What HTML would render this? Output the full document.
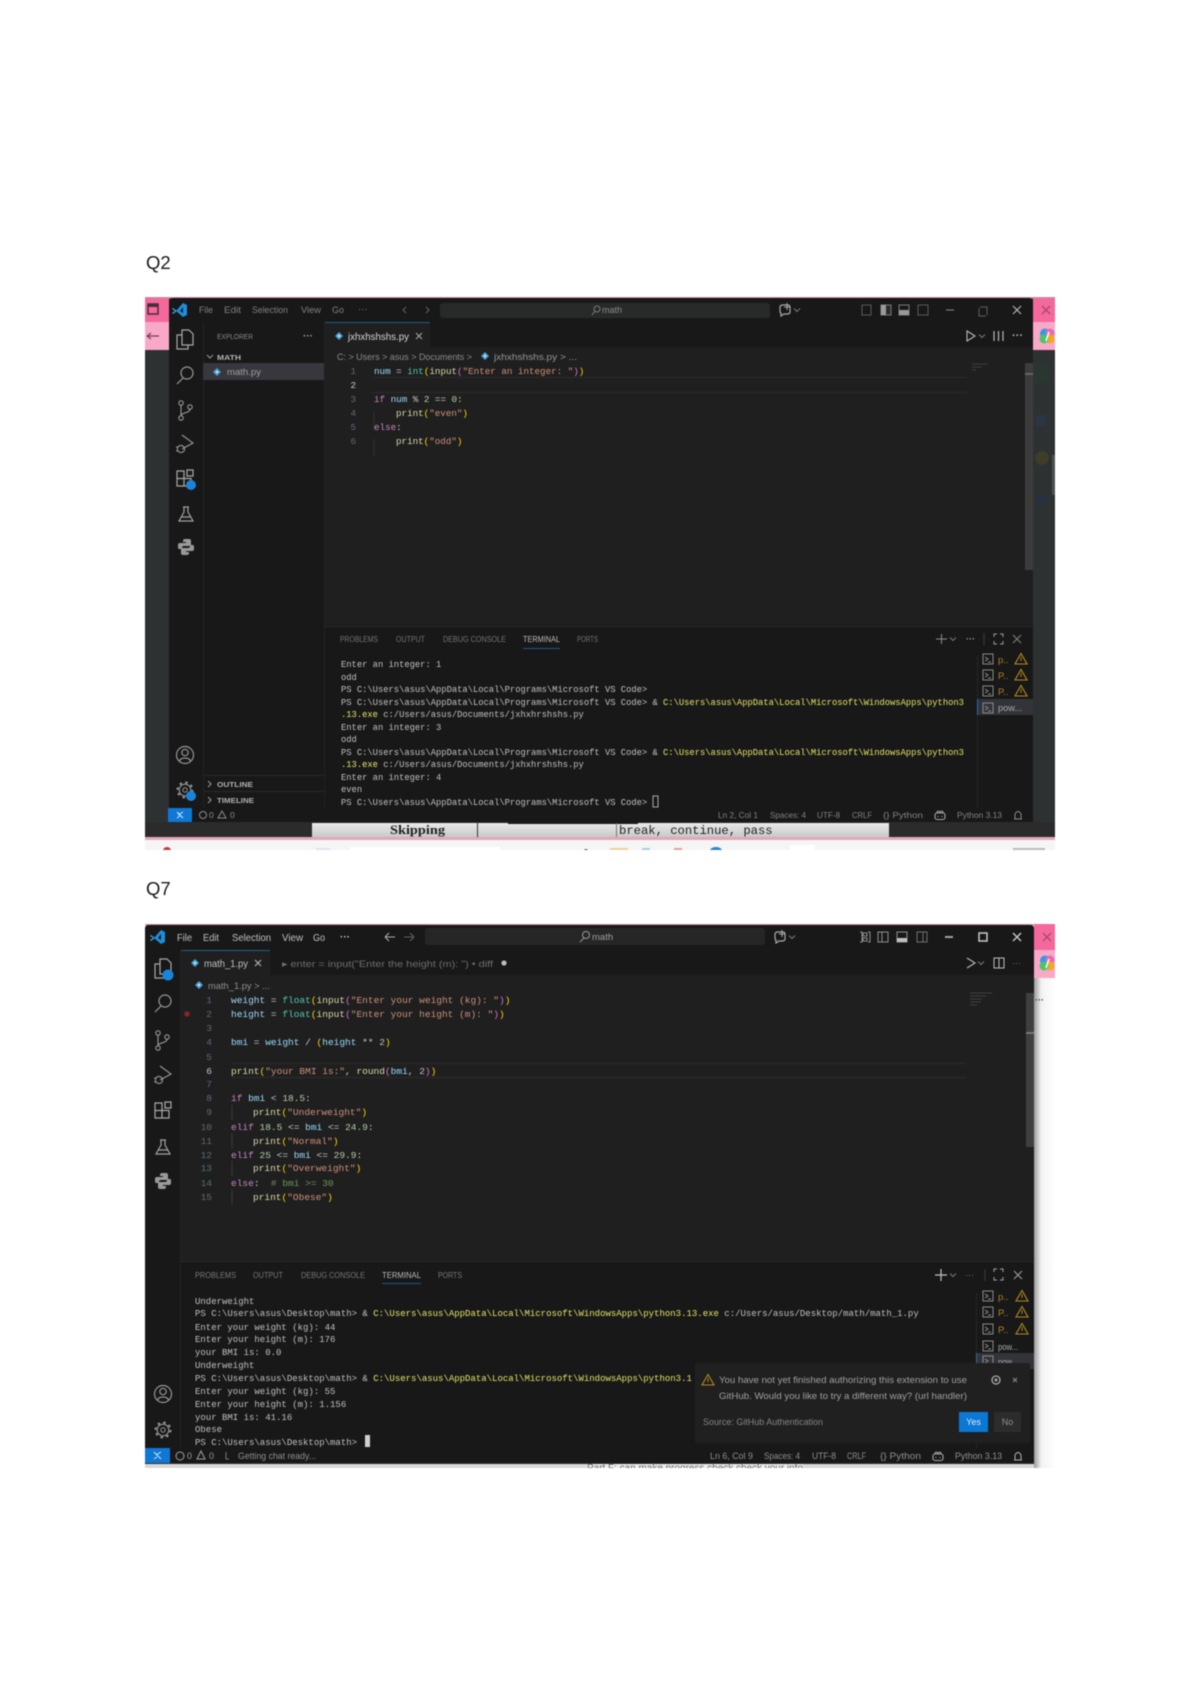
<!DOCTYPE html>
<html><head><meta charset="utf-8"><title>Q2 Q7</title>
<style>
html,body{margin:0;padding:0;background:#fff;width:1200px;height:1696px;overflow:hidden}
svg{display:block;position:absolute;left:0;top:0;filter:blur(.6px)}
text{white-space:pre}
.m{font-family:"Liberation Mono",monospace}
.s{font-family:"Liberation Sans",sans-serif}
.v{fill:#9cdcfe}.f{fill:#dcdcaa}.t{fill:#ce9178}.k{fill:#c586c0}.n{fill:#b5cea8}.b{fill:#ffd700}.c{fill:#4ec9b0}.w{fill:#cccccc}.y{fill:#e3e36a}.g{fill:#6a9955}.p{fill:#da70d6}
</style></head><body>
<svg width="1200" height="1696" viewBox="0 0 1200 1696" xmlns="http://www.w3.org/2000/svg">
<defs>
<g id="logo"><path d="M-7 -2 L-3 1 L-7 4 L-8 3 L-5 1 L-8 -1Z" fill="#3aa5e8"/><path d="M3 -7 L7 -5 V5 L3 7 L-4 1Z M3 -3 L0 1 L3 3Z" fill="#1c8fdc"/></g>
<g id="py"><path d="M0 -4 L4 0 L0 4 L-4 0Z" fill="#4a9fd0"/><circle r="1.2" fill="#d6e8f0"/></g>
<g id="files" fill="none" stroke="#a8a8a8" stroke-width="1.2"><path d="M-3 -9H4L8 -5V6H-3Z"/><path d="M-3 -4H-8V10H3V6"/></g>
<g id="search" fill="none" stroke="#989898" stroke-width="1.2"><circle cx="2" cy="-2" r="6"/><path d="M-2 3L-8 9"/></g>
<g id="git" fill="none" stroke="#989898" stroke-width="1.1"><circle cx="-4" cy="-7" r="2.2"/><circle cx="-4" cy="8" r="2.2"/><circle cx="5" cy="-3" r="2.2"/><path d="M-4 -5V6M5 -1C5 3 -1 2 -4 5"/></g>
<g id="debug" fill="none" stroke="#989898" stroke-width="1.1"><path d="M-3 -9L8 -1L-3 5"/><circle cx="-4" cy="5" r="3.6"/><path d="M-9 3H-7M-9 7H-7"/></g>
<g id="ext" fill="none" stroke="#a8a8a8" stroke-width="1.2"><path d="M-8 -7H-1V8H-8ZM-8 0.500H6V8H-8ZM2 -8H8V-2H2Z"/></g>
<g id="flask" fill="none" stroke="#a0a0a0" stroke-width="1.2"><path d="M-3 -7H3M-2 -7V-2L-7 7H7L2 -2V-7M-5 3H5"/></g>
<g id="pyfull"><path d="M-1 -8H3Q5 -8 5 -6V-1H-2Q-4 -1 -4 1V2H-7Q-8 2 -8 0V-2Q-8 -4 -6 -4H0V-5H-3V-6Q-3 -8 -1 -8Z" fill="#9a9a9a"/><path d="M1 8H-3Q-5 8 -5 6V1H2Q4 1 4 -1V-2H7Q8 -2 8 0V2Q8 4 6 4H0V5H3V6Q3 8 1 8Z" fill="#9a9a9a"/></g>
<g id="acct" fill="none" stroke="#969696" stroke-width="1.2"><circle r="8.500"/><circle cy="-2.500" r="3.200"/><path d="M-5.500 6C-4 2 4 2 5.500 6"/></g>
<g id="gear" fill="none" stroke="#969696"><circle r="5.800" stroke-width="1.1"/><circle r="7.500" stroke-width="2" stroke-dasharray="2.400 3.500"/><circle r="2.200" stroke-width="1"/></g>
<g id="warn"><path d="M0 -5.500L6 5H-6Z" fill="none" stroke="#b08a20" stroke-width="1.100"/><path d="M0 -2V2" stroke="#b08a20"/></g>
<g id="term" fill="none" stroke="#8a8a8a" stroke-width="1"><rect x="-5" y="-5" width="10" height="10"/><path d="M-3 -2L0 0L-3 2M0 3H3"/></g>
<g id="copilot" fill="none" stroke="#aaaaaa" stroke-width="1.200"><path d="M-5 -3Q-5 -5 -2 -5H3Q5 -5 5 -3V2Q5 4 2 4H-1L-4 6V3Q-5 3 -5 1Z"/><path d="M2 -7V0M-1 -3H5" stroke-width="1"/></g>
<g id="chev" fill="none" stroke="#7a7a7a"><path d="M-3 -1.500L0 1.500L3 -1.500"/></g>
<g id="bot" fill="none" stroke="#a5a5a5" stroke-width="1.100"><rect x="-5" y="-2" width="10" height="6.500" rx="2"/><path d="M-3 -2Q-3 -5 0 -3Q3 -5 3 -2M-2 1V2M2 1V2"/></g>
<g id="cop"><circle cx="-2" cy="-2.500" r="5" fill="#2f9be8"/><circle cx="3" cy="-3" r="4.500" fill="#e86ab0"/><circle cx="3" cy="3" r="4.500" fill="#f5a623"/><circle cx="-3" cy="3" r="4.500" fill="#4fc36a"/><path d="M-1 5L2 -4" stroke="#fff" stroke-width="1.500"/></g>
<linearGradient id="fade" x1="0" x2="1" y1="0" y2="0"><stop offset="0" stop-color="#9a9a9a"/><stop offset=".35" stop-color="#f2f2f2"/><stop offset="1" stop-color="#fff"/></linearGradient>
<linearGradient id="tb" x1="0" x2="0" y1="0" y2="1"><stop offset="0" stop-color="#e9e9e9"/><stop offset="1" stop-color="#c9c9c9"/></linearGradient>
</defs>

<text class="s" x="146" y="269" font-size="18.500" fill="#1a1a1a">Q2</text>
<text class="s" x="146" y="895" font-size="18.500" fill="#1a1a1a">Q7</text>

<!-- ============ SCREENSHOT 1 ============ -->
<rect x="145" y="297" width="910" height="553" fill="#2d3131"/>
<rect x="145" y="297" width="24" height="25" fill="#f4689c"/>
<rect x="145" y="322" width="24" height="28" fill="#f9a9c8"/>
<rect x="1033" y="297" width="22" height="25" fill="#f4689c"/>
<rect x="1033" y="322" width="22" height="28" fill="#f9a9c8"/>
<rect x="145" y="297" width="910" height="1.500" fill="#c98a9e"/>
<rect x="148" y="304" width="10" height="10" fill="none" stroke="#4a2a38" stroke-width="1.500"/><rect x="148" y="304" width="10" height="3" fill="#4a2a38"/>
<path d="M147 336H159M147 336L151 333M147 336L151 339" stroke="#7a3a55" stroke-width="1.200" fill="none"/>
<path d="M1042 306L1050 314M1050 306L1042 314" stroke="#a84a70" stroke-width="1.300"/>
<use href="#cop" x="1047" y="336"/>
<circle cx="1040" cy="373" r="11" fill="#2a3731"/>
<rect x="1036" y="415" width="10" height="11" fill="#2a3644"/>
<circle cx="1042" cy="458" r="7" fill="#3f3c28"/>
<rect x="1052" y="455" width="3" height="40" fill="#4c5050"/>
<rect x="1036" y="495" width="10" height="10" fill="#263240"/>

<!-- window -->
<rect x="169" y="298" width="864" height="524" rx="4" fill="#181818"/>
<rect x="324" y="347" width="709" height="278" fill="#1f1f1f"/>
<rect x="324" y="322" width="106" height="25" fill="#1f1f1f"/>
<rect x="324" y="322" width="106" height="1" fill="#1a5f8a"/>
<rect x="203" y="322" width="121" height="486" fill="#181818"/>
<rect x="203" y="322" width="1" height="486" fill="#222"/>
<rect x="324" y="322" width="1" height="486" fill="#222"/>
<rect x="324" y="626" width="709" height="1" fill="#2b2b2b"/>

<!-- titlebar -->
<use href="#logo" x="180" y="310"/>
<g class="s" font-size="9.500" fill="#808080">
<text x="199" y="313" textLength="14" lengthAdjust="spacingAndGlyphs">File</text>
<text x="224" y="313" textLength="17" lengthAdjust="spacingAndGlyphs">Edit</text>
<text x="252" y="313" textLength="36" lengthAdjust="spacingAndGlyphs">Selection</text>
<text x="301" y="313" textLength="20" lengthAdjust="spacingAndGlyphs">View</text>
<text x="332" y="313" textLength="12" lengthAdjust="spacingAndGlyphs">Go</text>
<text x="358" y="312">···</text>
</g>
<path d="M406 307L403 310L406 313M426 307L429 310L426 313" fill="none" stroke="#5e5e5e" stroke-width="1.100"/>
<rect x="440" y="303" width="330" height="15" rx="3" fill="#282a2a"/>
<circle cx="597" cy="309" r="3" fill="none" stroke="#7a7a7a"/><path d="M595 311L592 315" stroke="#7a7a7a"/>
<text class="s" x="602" y="313" font-size="9" fill="#8a8a8a">math</text>
<use href="#copilot" x="785" y="310"/>
<use href="#chev" x="797" y="310"/>
<g fill="none" stroke="#7a7a7a">
<rect x="862" y="305" width="9" height="10" stroke="#5a5a5a"/>
<rect x="881" y="305" width="10" height="10" fill="#2a2a2a"/><rect x="881" y="305" width="5" height="10" fill="#9a9a9a" stroke="none"/>
<rect x="899" y="305" width="10" height="10"/><rect x="899" y="310" width="10" height="5" fill="#9a9a9a" stroke="none"/>
<rect x="918" y="305" width="10" height="10" stroke="#5a5a5a"/>
<path d="M946 310H954" stroke="#8a8a8a"/>
<path d="M980 307H987V315M986 316H979V308" stroke="#5f5f5f"/>
<path d="M1013 306L1021 314M1021 306L1013 314" stroke="#b0b0b0" stroke-width="1.200"/>
</g>

<!-- tab row -->
<use href="#py" x="339" y="336"/>
<text class="s" x="348" y="340" font-size="10" fill="#d4d4d4" textLength="61" lengthAdjust="spacingAndGlyphs">jxhxhshshs.py</text>
<path d="M416 333L422 339M422 333L416 339" stroke="#a8a8a8" stroke-width="1"/>
<path d="M967 331L975 336L967 341Z" fill="none" stroke="#b8b8b8" stroke-width="1.100"/>
<use href="#chev" x="982" y="336"/>
<path d="M994 331V341M998.500 331V341M1003 331V341" stroke="#b8b8b8" stroke-width="1.200"/>
<text class="s" x="1012" y="339" font-size="11" fill="#b0b0b0" font-weight="bold">···</text>

<!-- sidebar -->
<text class="s" x="217" y="339" font-size="7.500" fill="#8a8a8a" textLength="36" lengthAdjust="spacingAndGlyphs">EXPLORER</text>
<text class="s" x="303" y="339" font-size="10" fill="#a0a0a0" font-weight="bold">···</text>
<path d="M207 355L210 358L213 355" fill="none" stroke="#999"/>
<text class="s" x="217" y="360" font-size="7.500" font-weight="bold" fill="#b4b4b4" textLength="24" lengthAdjust="spacingAndGlyphs">MATH</text>
<rect x="203" y="363" width="121" height="17" fill="#37373d"/>
<use href="#py" x="217" y="372"/>
<text class="s" x="227" y="375" font-size="9" fill="#a0a0a0" textLength="34" lengthAdjust="spacingAndGlyphs">math.py</text>
<rect x="204" y="775" width="120" height="1" fill="#2a2a2a"/><rect x="204" y="791" width="120" height="1" fill="#2a2a2a"/>
<path d="M208 781L211 784L208 787M208 797L211 800L208 803" fill="none" stroke="#999"/>
<g class="s" font-size="7.500" font-weight="bold" fill="#b0b0b0">
<text x="217" y="787" textLength="36" lengthAdjust="spacingAndGlyphs">OUTLINE</text>
<text x="217" y="803" textLength="37" lengthAdjust="spacingAndGlyphs">TIMELINE</text>
</g>

<!-- activity -->
<use href="#files" x="185" y="339"/>
<use href="#search" x="185" y="375"/>
<use href="#git" x="185" y="410"/>
<use href="#debug" x="185" y="444"/>
<use href="#ext" x="185" y="478"/>
<circle cx="191" cy="485" r="5" fill="#1a84d8"/>
<use href="#flask" x="186" y="514"/>
<use href="#pyfull" x="186" y="547"/>
<use href="#acct" x="185" y="755"/>
<use href="#gear" x="185" y="790"/>
<circle cx="191" cy="796" r="5" fill="#1a84d8"/>

<!-- breadcrumb -->
<text class="s" x="337" y="360" font-size="9.500" fill="#8a8a8a" textLength="135" lengthAdjust="spacingAndGlyphs">C: &gt; Users &gt; asus &gt; Documents &gt;</text>
<use href="#py" x="485" y="356"/>
<text class="s" x="494" y="360" font-size="9.500" fill="#969696" textLength="83" lengthAdjust="spacingAndGlyphs">jxhxhshshs.py &gt; ...</text>

<!-- code 1 -->
<rect x="372" y="377" width="595" height="1" fill="#2b2b2b"/><rect x="372" y="392" width="595" height="1" fill="#2b2b2b"/>
<path d="M374 412V430M374 439V456" stroke="#333" />
<g class="m" font-size="9.230" fill="#636a72" text-anchor="end">
<text x="356" y="374">1</text><text x="356" y="388" fill="#c8c8c8">2</text><text x="356" y="402">3</text><text x="356" y="416">4</text><text x="356" y="430">5</text><text x="356" y="444">6</text>
</g>
<g class="m" font-size="9.230">
<text x="374" y="374"><tspan class="v">num</tspan><tspan class="w"> = </tspan><tspan class="c">int</tspan><tspan class="b">(</tspan><tspan class="f">input</tspan><tspan class="p">(</tspan><tspan class="t">"Enter an integer: "</tspan><tspan class="p">)</tspan><tspan class="b">)</tspan></text>
<text x="374" y="402"><tspan class="k">if</tspan><tspan class="w"> </tspan><tspan class="v">num</tspan><tspan class="w"> % </tspan><tspan class="n">2</tspan><tspan class="w"> == </tspan><tspan class="n">0</tspan><tspan class="w">:</tspan></text>
<text x="396" y="416"><tspan class="f">print</tspan><tspan class="b">(</tspan><tspan class="t">"even"</tspan><tspan class="b">)</tspan></text>
<text x="374" y="430"><tspan class="k">else</tspan><tspan class="w">:</tspan></text>
<text x="396" y="444"><tspan class="f">print</tspan><tspan class="b">(</tspan><tspan class="t">"odd"</tspan><tspan class="b">)</tspan></text>
</g>
<path d="M972 364H988M972 367H982M972 370H976" stroke="#4a4a4a" stroke-width=".7"/>
<rect x="1025" y="363" width="8" height="207" fill="#3c3c3c"/><rect x="1025" y="373" width="8" height="2" fill="#666"/>

<!-- panel tabs -->
<g class="s" font-size="7.800" fill="#737373">
<text x="340" y="642" textLength="38" lengthAdjust="spacingAndGlyphs">PROBLEMS</text>
<text x="396" y="642" textLength="29" lengthAdjust="spacingAndGlyphs">OUTPUT</text>
<text x="443" y="642" textLength="63" lengthAdjust="spacingAndGlyphs">DEBUG CONSOLE</text>
<text x="523" y="642" textLength="37" lengthAdjust="spacingAndGlyphs" fill="#bcbcbc">TERMINAL</text>
<text x="577" y="642" textLength="21" lengthAdjust="spacingAndGlyphs">PORTS</text>
</g>
<rect x="523" y="648" width="37" height="1" fill="#1a5a88"/>
<path d="M936 639H947M941.500 634V644" stroke="#8f8f8f"/>
<use href="#chev" x="953" y="639"/>
<text class="s" x="966" y="642" font-size="9" fill="#999" font-weight="bold">···</text>
<path d="M984 633V645" stroke="#3a3a3a"/>
<path d="M994 637V634H997M1000 634H1003V637M1003 641V644H1000M997 644H994V641" fill="none" stroke="#9a9a9a"/>
<path d="M1013 635L1021 643M1021 635L1013 643" stroke="#808080"/>

<!-- terminal 1 -->
<g class="m" font-size="8.800" fill="#c0c0c0">
<text x="341" y="667">Enter an integer: 1</text>
<text x="341" y="680">odd</text>
<text x="341" y="692">PS C:\Users\asus\AppData\Local\Programs\Microsoft VS Code&gt;</text>
<text x="341" y="705">PS C:\Users\asus\AppData\Local\Programs\Microsoft VS Code&gt; &amp; <tspan class="y">C:\Users\asus\AppData\Local\Microsoft\WindowsApps\python3</tspan></text>
<text x="341" y="717"><tspan class="y">.13.exe</tspan> c:/Users/asus/Documents/jxhxhrshshs.py</text>
<text x="341" y="730">Enter an integer: 3</text>
<text x="341" y="742">odd</text>
<text x="341" y="755">PS C:\Users\asus\AppData\Local\Programs\Microsoft VS Code&gt; &amp; <tspan class="y">C:\Users\asus\AppData\Local\Microsoft\WindowsApps\python3</tspan></text>
<text x="341" y="767"><tspan class="y">.13.exe</tspan> c:/Users/asus/Documents/jxhxhrshshs.py</text>
<text x="341" y="780">Enter an integer: 4</text>
<text x="341" y="792">even</text>
<text x="341" y="805">PS C:\Users\asus\AppData\Local\Programs\Microsoft VS Code&gt;</text>
</g>
<rect x="653" y="796" width="5" height="11" fill="none" stroke="#a8a8a8"/>
<rect x="977" y="655" width="1" height="153" fill="#262626"/>
<rect x="977" y="699" width="56" height="16" fill="#33343a"/><rect x="977" y="699" width="1" height="16" fill="#1f6fa8"/>
<use href="#term" x="988" y="659"/><use href="#term" x="988" y="675"/><use href="#term" x="988" y="691"/><use href="#term" x="988" y="708"/>
<g class="s" font-size="9.500" fill="#a8852a">
<text x="998" y="663">p..</text><text x="998" y="679">P..</text><text x="998" y="695">P..</text>
<text x="998" y="711" fill="#a8a8a8" textLength="24" lengthAdjust="spacingAndGlyphs">pow...</text>
</g>
<use href="#warn" x="1021" y="659"/><use href="#warn" x="1021" y="675"/><use href="#warn" x="1021" y="691"/>

<!-- status 1 -->
<rect x="169" y="808" width="864" height="14" fill="#181818"/>
<rect x="168" y="808" width="24" height="14" rx="1" fill="#0f78d4"/>
<path d="M177 812L183 818M183 812L178 815M177 818L180 816" stroke="#cfe7fb" fill="none"/>
<circle cx="203" cy="815" r="3.500" fill="none" stroke="#8a8a8a"/>
<text class="s" x="209" y="818" font-size="8.500" fill="#8a8a8a">0</text>
<path d="M222 811L226 818H218Z" fill="none" stroke="#8a8a8a"/>
<text class="s" x="230" y="818" font-size="8.500" fill="#8a8a8a">0</text>
<g class="s" font-size="8.500" fill="#838383">
<text x="718" y="818" textLength="40" lengthAdjust="spacingAndGlyphs">Ln 2, Col 1</text>
<text x="770" y="818" textLength="36" lengthAdjust="spacingAndGlyphs">Spaces: 4</text>
<text x="817" y="818" textLength="23" lengthAdjust="spacingAndGlyphs">UTF-8</text>
<text x="852" y="818" textLength="20" lengthAdjust="spacingAndGlyphs">CRLF</text>
<text x="883" y="818" textLength="40" lengthAdjust="spacingAndGlyphs">{} Python</text>
<text x="957" y="818" textLength="45" lengthAdjust="spacingAndGlyphs">Python 3.13</text>
</g>
<use href="#bot" x="940" y="815"/>
<path d="M1014 819H1022M1015 819V814Q1018 809 1021 814V819" fill="none" stroke="#8a8a8a"/>

<!-- below window strip -->
<rect x="145" y="822" width="910" height="16" fill="#2b2b2b"/>
<rect x="312" y="823" width="577" height="14" fill="url(#tb)"/>
<rect x="508" y="822" width="130" height="2" fill="#1a1a1a"/>
<rect x="477" y="823" width="1" height="14" fill="#333"/>
<rect x="616" y="823" width="1" height="14" fill="#777"/>
<text x="390" y="834" font-family="'Liberation Serif',serif" font-weight="bold" font-size="13" fill="#222" textLength="55" lengthAdjust="spacingAndGlyphs">Skipping</text>
<text class="m" x="619" y="834" font-size="12.200" fill="#222">break, continue, pass</text>
<rect x="145" y="837" width="910" height="3" fill="#e6a5b8"/>
<rect x="145" y="840" width="910" height="10" fill="#f5f5f5"/>
<circle cx="167" cy="851" r="4" fill="#c23a3a"/>
<rect x="350" y="847" width="150" height="3" fill="#fff"/>
<rect x="316" y="848" width="14" height="2" fill="#dce6ee"/>
<circle cx="586" cy="851" r="2" fill="#555"/>
<rect x="610" y="848" width="18" height="2" fill="#ecd49a"/>
<rect x="642" y="848" width="8" height="2" fill="#a9cfdd"/>
<rect x="674" y="848" width="8" height="2" fill="#e0a0a0"/>
<ellipse cx="716" cy="851" rx="6" ry="4" fill="#2c82c9"/>
<rect x="790" y="845" width="25" height="5" fill="#fff"/>
<rect x="1013" y="848" width="32" height="2" fill="#bbb"/>
<rect x="140" y="850" width="920" height="10" fill="#fff"/>

<!-- ============ SCREENSHOT 2 ============ -->
<rect x="1034" y="924" width="21" height="544" fill="url(#fade)"/>
<rect x="145" y="1463" width="889" height="5" fill="#d8d8d8"/>
<rect x="145" y="924" width="910" height="1.200" fill="#c98a9e"/>
<rect x="1034" y="924" width="21" height="26" fill="#f4689c"/>
<rect x="1034" y="950" width="21" height="28" fill="#f9a9c8"/>
<path d="M1043 933L1051 941M1051 933L1043 941" stroke="#a84a70" stroke-width="1.300"/>
<use href="#cop" x="1047" y="963"/>
<text class="s" x="1035" y="1003" font-size="9" font-weight="bold" fill="#444">···</text>
<rect x="145" y="925" width="889" height="538" rx="3" fill="#181818"/>
<rect x="180" y="975" width="854" height="285" fill="#1f1f1f"/>
<rect x="180" y="950" width="90" height="25" fill="#1f1f1f"/>
<rect x="180" y="950" width="90" height="1" fill="#1a5f8a"/>
<rect x="180" y="950" width="1" height="498" fill="#222"/>
<rect x="180" y="1261" width="854" height="1" fill="#2b2b2b"/>

<!-- title -->
<use href="#logo" x="158" y="937"/>
<g class="s" font-size="10" fill="#c0c0c0">
<text x="177" y="941" textLength="15" lengthAdjust="spacingAndGlyphs">File</text>
<text x="203" y="941" textLength="16" lengthAdjust="spacingAndGlyphs">Edit</text>
<text x="232" y="941" textLength="39" lengthAdjust="spacingAndGlyphs">Selection</text>
<text x="282" y="941" textLength="21" lengthAdjust="spacingAndGlyphs">View</text>
<text x="313" y="941" textLength="12" lengthAdjust="spacingAndGlyphs">Go</text>
<text x="340" y="940" font-weight="bold">···</text>
</g>
<path d="M395 937H385M385 937L389 933M385 937L389 941" fill="none" stroke="#adadad" stroke-width="1.100"/>
<path d="M404 937H414M414 937L410 933M414 937L410 941" fill="none" stroke="#606060" stroke-width="1.100"/>
<rect x="425" y="928" width="340" height="17" rx="3" fill="#262626"/>
<circle cx="586" cy="935" r="3.500" fill="none" stroke="#999"/><path d="M584 938L580 942" stroke="#999"/>
<text class="s" x="592" y="940" font-size="9.500" fill="#a0a0a0">math</text>
<use href="#copilot" x="780" y="937"/>
<use href="#chev" x="792" y="937"/>
<g fill="none" stroke="#8f8f8f">
<path d="M860 932H862V942H860M868 932H870V942H868"/><rect x="863" y="933" width="4" height="3" /><rect x="863" y="938" width="4" height="3"/>
<rect x="878" y="932" width="10" height="10"/><path d="M882 932V942"/>
<rect x="897" y="932" width="10" height="10"/><rect x="897" y="938" width="10" height="4" fill="#bfbfbf" stroke="none"/>
<rect x="917" y="932" width="10" height="10" stroke="#707070"/><path d="M923 932V942" stroke="#707070"/>
<path d="M945 937H953" stroke="#a0a0a0" stroke-width="2"/>
<rect x="979" y="933" width="8" height="8" stroke="#c8c8c8" stroke-width="1.500"/>
<path d="M1013 933L1021 941M1021 933L1013 941" stroke="#d0d0d0" stroke-width="1.300"/>
</g>

<!-- tabs -->
<use href="#py" x="195" y="963"/>
<text class="s" x="204" y="967" font-size="10" fill="#c0c0c0" textLength="44" lengthAdjust="spacingAndGlyphs">math_1.py</text>
<path d="M255 960L261 966M261 960L255 966" stroke="#bcbcbc" stroke-width="1"/>
<text class="s" x="282" y="967" font-size="9.500" fill="#6e6e6e" textLength="211" lengthAdjust="spacingAndGlyphs">▸ enter = input("Enter the height (m): ") • diff</text>
<circle cx="504" cy="963" r="2.600" fill="#bcbcbc"/>
<path d="M967 958L975 963L967 968" fill="none" stroke="#bcbcbc" stroke-width="1.100"/>
<use href="#chev" x="981" y="963"/>
<rect x="994" y="958" width="10" height="10" fill="none" stroke="#bcbcbc"/><path d="M999 958V968" stroke="#bcbcbc"/>
<text class="s" x="1012" y="966" font-size="9" fill="#666">···</text>

<!-- activity -->
<use href="#files" x="163" y="968"/>
<circle cx="168" cy="975" r="5.500" fill="#1a84d8"/>
<use href="#search" x="163" y="1003"/>
<use href="#git" x="162" y="1040"/>
<use href="#debug" x="163" y="1075"/>
<use href="#ext" x="163" y="1110"/>
<use href="#flask" x="163" y="1147"/>
<use href="#pyfull" x="163" y="1181"/>
<use href="#acct" x="163" y="1394"/>
<use href="#gear" x="163" y="1430"/>

<!-- breadcrumb -->
<use href="#py" x="199" y="985"/>
<text class="s" x="208" y="989" font-size="9.500" fill="#909090" textLength="62" lengthAdjust="spacingAndGlyphs">math_1.py &gt; ...</text>

<!-- code 2 -->
<rect x="231" y="1063" width="735" height="1" fill="#2b2b2b"/><rect x="231" y="1077" width="735" height="1" fill="#2b2b2b"/>
<path d="M232 1105V1120M232 1133V1148M232 1161V1176M232 1190V1205" stroke="#3a3a3a"/>
<circle cx="187" cy="1014" r="2.800" fill="#8a2323"/>
<g class="m" font-size="9.500" fill="#636a72" text-anchor="end">
<text x="212" y="1003">1</text><text x="212" y="1017">2</text><text x="212" y="1031">3</text><text x="212" y="1045">4</text><text x="212" y="1060">5</text><text x="212" y="1074" fill="#c8c8c8">6</text><text x="212" y="1087">7</text><text x="212" y="1101">8</text><text x="212" y="1115">9</text><text x="212" y="1130">10</text><text x="212" y="1144">11</text><text x="212" y="1158">12</text><text x="212" y="1171">13</text><text x="212" y="1186">14</text><text x="212" y="1200">15</text>
</g>
<g class="m" font-size="9.500">
<text x="231" y="1003"><tspan class="v">weight</tspan><tspan class="w"> = </tspan><tspan class="c">float</tspan><tspan class="b">(</tspan><tspan class="f">input</tspan><tspan class="p">(</tspan><tspan class="t">"Enter your weight (kg): "</tspan><tspan class="p">)</tspan><tspan class="b">)</tspan></text>
<text x="231" y="1017"><tspan class="v">height</tspan><tspan class="w"> = </tspan><tspan class="c">float</tspan><tspan class="b">(</tspan><tspan class="f">input</tspan><tspan class="p">(</tspan><tspan class="t">"Enter your height (m): "</tspan><tspan class="p">)</tspan><tspan class="b">)</tspan></text>
<text x="231" y="1045"><tspan class="v">bmi</tspan><tspan class="w"> = </tspan><tspan class="v">weight</tspan><tspan class="w"> / </tspan><tspan class="b">(</tspan><tspan class="v">height</tspan><tspan class="w"> ** </tspan><tspan class="n">2</tspan><tspan class="b">)</tspan></text>
<text x="231" y="1074"><tspan class="f">print</tspan><tspan class="b">(</tspan><tspan class="t">"your BMI is:"</tspan><tspan class="w">, </tspan><tspan class="f">round</tspan><tspan class="p">(</tspan><tspan class="v">bmi</tspan><tspan class="w">, </tspan><tspan class="n">2</tspan><tspan class="p">)</tspan><tspan class="b">)</tspan></text>
<text x="231" y="1101"><tspan class="k">if</tspan><tspan class="w"> </tspan><tspan class="v">bmi</tspan><tspan class="w"> &lt; </tspan><tspan class="n">18.5</tspan><tspan class="w">:</tspan></text>
<text x="253" y="1115"><tspan class="f">print</tspan><tspan class="b">(</tspan><tspan class="t">"Underweight"</tspan><tspan class="b">)</tspan></text>
<text x="231" y="1130"><tspan class="k">elif</tspan><tspan class="w"> </tspan><tspan class="n">18.5</tspan><tspan class="w"> &lt;= </tspan><tspan class="v">bmi</tspan><tspan class="w"> &lt;= </tspan><tspan class="n">24.9</tspan><tspan class="w">:</tspan></text>
<text x="253" y="1144"><tspan class="f">print</tspan><tspan class="b">(</tspan><tspan class="t">"Normal"</tspan><tspan class="b">)</tspan></text>
<text x="231" y="1158"><tspan class="k">elif</tspan><tspan class="w"> </tspan><tspan class="n">25</tspan><tspan class="w"> &lt;= </tspan><tspan class="v">bmi</tspan><tspan class="w"> &lt;= </tspan><tspan class="n">29.9</tspan><tspan class="w">:</tspan></text>
<text x="253" y="1171"><tspan class="f">print</tspan><tspan class="b">(</tspan><tspan class="t">"Overweight"</tspan><tspan class="b">)</tspan></text>
<text x="231" y="1186"><tspan class="k">else</tspan><tspan class="w">:  </tspan><tspan class="g"># bmi &gt;= 30</tspan></text>
<text x="253" y="1200"><tspan class="f">print</tspan><tspan class="b">(</tspan><tspan class="t">"Obese"</tspan><tspan class="b">)</tspan></text>
</g>
<path d="M970 993H992M970 996H986M970 999H982M970 1002H981M970 1005H977" stroke="#4c4c4c" stroke-width=".7"/>
<rect x="1026" y="993" width="8" height="154" fill="#3f3f3f"/><rect x="1026" y="1032" width="8" height="2" fill="#777"/>

<!-- panel tabs -->
<g class="s" font-size="7.800" fill="#787878">
<text x="195" y="1278" textLength="41" lengthAdjust="spacingAndGlyphs">PROBLEMS</text>
<text x="253" y="1278" textLength="30" lengthAdjust="spacingAndGlyphs">OUTPUT</text>
<text x="301" y="1278" textLength="64" lengthAdjust="spacingAndGlyphs">DEBUG CONSOLE</text>
<text x="382" y="1278" textLength="39" lengthAdjust="spacingAndGlyphs" fill="#bcbcbc">TERMINAL</text>
<text x="438" y="1278" textLength="24" lengthAdjust="spacingAndGlyphs">PORTS</text>
</g>
<rect x="382" y="1283" width="39" height="1" fill="#1a5a88"/>
<path d="M935 1275H947M941 1269V1281" stroke="#c0c0c0" stroke-width="1.200"/>
<use href="#chev" x="953" y="1275"/>
<text class="s" x="965" y="1278" font-size="9" fill="#777">···</text>
<path d="M985 1269V1281" stroke="#3a3a3a"/>
<path d="M994 1272V1269H997M1000 1269H1003V1272M1003 1277V1280H1000M997 1280H994V1277" fill="none" stroke="#a0a0a0"/>
<path d="M1014 1271L1022 1279M1022 1271L1014 1279" stroke="#a0a0a0"/>

<!-- terminal 2 -->
<g class="m" font-size="9" fill="#c0c0c0">
<text x="195" y="1304">Underweight</text>
<text x="195" y="1316">PS C:\Users\asus\Desktop\math&gt; &amp; <tspan class="y">C:\Users\asus\AppData\Local\Microsoft\WindowsApps\python3.13.exe</tspan> c:/Users/asus/Desktop/math/math_1.py</text>
<text x="195" y="1330">Enter your weight (kg): 44</text>
<text x="195" y="1342">Enter your height (m): 176</text>
<text x="195" y="1355">your BMI is: 0.0</text>
<text x="195" y="1368">Underweight</text>
<text x="195" y="1381">PS C:\Users\asus\Desktop\math&gt; &amp; <tspan class="y">C:\Users\asus\AppData\Local\Microsoft\WindowsApps\python3.1</tspan></text>
<text x="195" y="1394">Enter your weight (kg): 55</text>
<text x="195" y="1407">Enter your height (m): 1.156</text>
<text x="195" y="1420">your BMI is: 41.16</text>
<text x="195" y="1432">Obese</text>
<text x="195" y="1445">PS C:\Users\asus\Desktop\math&gt;</text>
</g>
<rect x="365" y="1435" width="5" height="12" fill="#d0d0d0"/>
<rect x="976" y="1293" width="1" height="155" fill="#262626"/>
<rect x="976" y="1353" width="58" height="16" fill="#33343a"/><rect x="976" y="1353" width="1" height="16" fill="#1f6fa8"/>
<use href="#term" x="988" y="1296"/><use href="#term" x="988" y="1312"/><use href="#term" x="988" y="1329"/><use href="#term" x="988" y="1346"/><use href="#term" x="988" y="1361"/>
<g class="s" font-size="9.500" fill="#a8852a">
<text x="998" y="1300">p..</text><text x="998" y="1316">P..</text><text x="998" y="1333">P..</text>
<text x="998" y="1350" fill="#a8a8a8" textLength="20" lengthAdjust="spacingAndGlyphs">pow...</text>
<text x="998" y="1365" fill="#a8a8a8" textLength="20" lengthAdjust="spacingAndGlyphs">pow...</text>
</g>
<use href="#warn" x="1022" y="1296"/><use href="#warn" x="1022" y="1312"/><use href="#warn" x="1022" y="1329"/>

<!-- notification -->
<rect x="695" y="1363" width="335" height="80" rx="2" fill="#202020"/>
<use href="#warn" x="708" y="1380"/>
<g class="s" font-size="9.500" fill="#a0a0a0">
<text x="719" y="1383" textLength="248" lengthAdjust="spacingAndGlyphs">You have not yet finished authorizing this extension to use</text>
<text x="719" y="1399" textLength="248" lengthAdjust="spacingAndGlyphs">GitHub. Would you like to try a different way? (url handler)</text>
<text x="703" y="1425" font-size="9" fill="#858585" textLength="120" lengthAdjust="spacingAndGlyphs">Source: GitHub Authentication</text>
</g>
<circle cx="996" cy="1380" r="4" fill="none" stroke="#aaa" stroke-width="1.300" />
<circle cx="996" cy="1380" r="1.500" fill="#aaa"/>
<path d="M1013 1378L1017 1382M1017 1378L1013 1382" stroke="#909090"/>
<rect x="959" y="1412" width="29" height="20" fill="#0a78d4"/>
<text class="s" x="973.500" y="1425" font-size="9" fill="#d8ecfb" text-anchor="middle">Yes</text>
<rect x="994" y="1412" width="27" height="20" fill="#2c2c2c"/>
<text class="s" x="1007.500" y="1425" font-size="9" fill="#8f8f8f" text-anchor="middle">No</text>

<!-- status 2 -->
<rect x="145" y="1448" width="889" height="15" fill="#181818"/>
<rect x="145" y="1448" width="25" height="15" fill="#0f78d4"/>
<path d="M154 1452L161 1459M161 1452L156 1455M154 1459L157 1457" stroke="#cfe7fb" fill="none"/>
<circle cx="180" cy="1456" r="4" fill="none" stroke="#a0a0a0"/>
<text class="s" x="187" y="1459" font-size="9" fill="#999">0</text>
<path d="M201 1451L205 1459H197Z" fill="none" stroke="#a0a0a0"/>
<text class="s" x="209" y="1459" font-size="9" fill="#999">0</text>
<path d="M226 1452V1459H229" fill="none" stroke="#777"/>
<g class="s" font-size="9" fill="#8f8f8f">
<text x="238" y="1459" textLength="78" lengthAdjust="spacingAndGlyphs">Getting chat ready...</text>
<text x="710" y="1459" textLength="43" lengthAdjust="spacingAndGlyphs">Ln 6, Col 9</text>
<text x="764" y="1459" textLength="36" lengthAdjust="spacingAndGlyphs">Spaces: 4</text>
<text x="812" y="1459" textLength="24" lengthAdjust="spacingAndGlyphs">UTF-8</text>
<text x="847" y="1459" textLength="19" lengthAdjust="spacingAndGlyphs">CRLF</text>
<text x="880" y="1459" textLength="41" lengthAdjust="spacingAndGlyphs">{} Python</text>
<text x="955" y="1459" textLength="47" lengthAdjust="spacingAndGlyphs">Python 3.13</text>
</g>
<use href="#bot" x="938" y="1456"/>
<path d="M1014 1460H1022M1015 1460V1455Q1018 1450 1021 1455V1460" fill="none" stroke="#b0b0b0"/>
<rect x="145" y="1463" width="889" height="1" fill="#2f2f2f"/>
<rect x="587" y="1464" width="216" height="4" fill="#ededed"/>
<text class="s" x="587" y="1471" font-size="10" fill="#666" textLength="216" lengthAdjust="spacingAndGlyphs">Part F: can make progress check check your info</text>
<rect x="145" y="1468" width="910" height="6" fill="#fff"/>
</svg>
</body></html>
